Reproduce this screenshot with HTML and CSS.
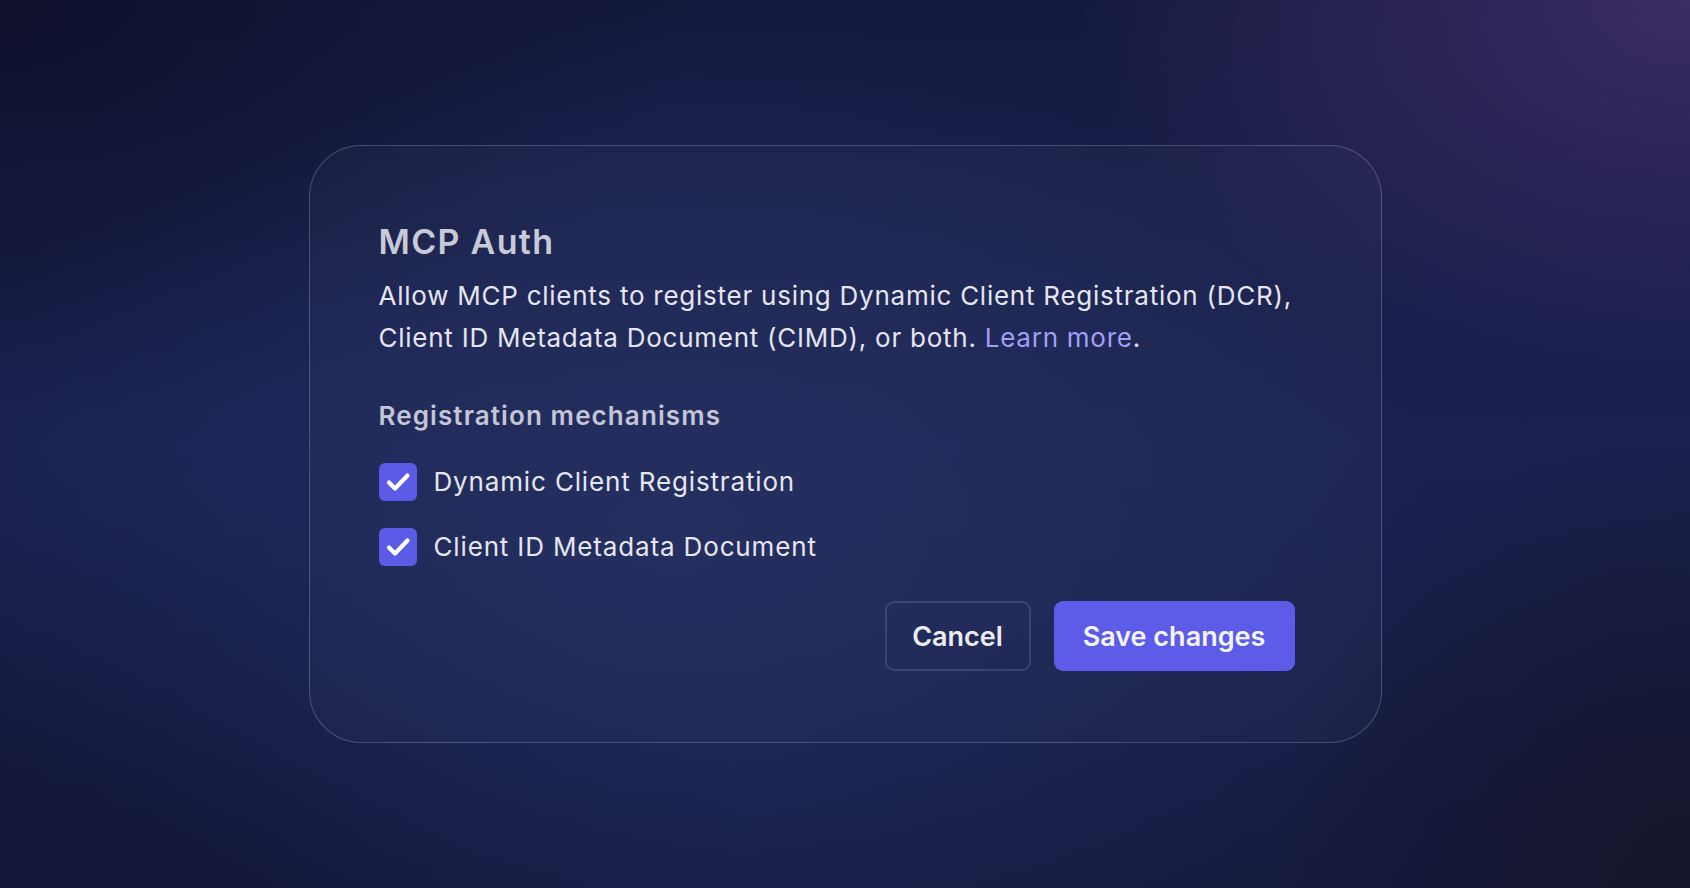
FILE: index.html
```html
<!DOCTYPE html>
<html lang="en">
<head>
<meta charset="utf-8">
<title>MCP Auth</title>
<link rel="stylesheet" href="styles.css">
</head>
<body>
<main class="stage">
  <section class="card">
    <h1 class="title">MCP Auth</h1>
    <p class="desc">Allow MCP clients to register using Dynamic Client Registration (DCR),<br>Client ID Metadata Document (CIMD), or both. <a class="link" href="#">Learn more</a>.</p>
    <h2 class="section-title">Registration mechanisms</h2>
    <div class="options">
      <label class="option">
        <span class="checkbox">
          <svg viewBox="0 0 38 38" width="38" height="38"><path d="M10 19.5 L16 25.5 L28.5 12.5" fill="none" stroke="#fff" stroke-width="4.2" stroke-linecap="round" stroke-linejoin="round"/></svg>
        </span>
        <span class="option-label">Dynamic Client Registration</span>
      </label>
      <label class="option">
        <span class="checkbox">
          <svg viewBox="0 0 38 38" width="38" height="38"><path d="M10 19.5 L16 25.5 L28.5 12.5" fill="none" stroke="#fff" stroke-width="4.2" stroke-linecap="round" stroke-linejoin="round"/></svg>
        </span>
        <span class="option-label">Client ID Metadata Document</span>
      </label>
    </div>
    <div class="actions">
      <button class="btn btn-secondary" type="button">Cancel</button>
      <button class="btn btn-primary" type="button">Save changes</button>
    </div>
  </section>
</main>
</body>
</html>
```

FILE: styles.css
```css
* { box-sizing: border-box; }

html, body {
  margin: 0;
  height: 100%;
}

body {
  font-family: Inter, "Noto Sans", "Liberation Sans", sans-serif;
  background-color: #161c45;
  background-image:
    radial-gradient(ellipse 620px 380px at 100% 0%, rgba(72, 50, 112, 0.75), rgba(72, 50, 112, 0) 100%),
    radial-gradient(ellipse 420px 460px at 100% 100%, rgba(20, 20, 38, 0.85), rgba(20, 20, 38, 0) 100%),
    radial-gradient(ellipse 760px 520px at 40% 60%, rgba(32, 44, 96, 0.9), rgba(32, 44, 96, 0) 100%),
    radial-gradient(ellipse 700px 420px at 0% 0%, rgba(14, 16, 42, 0.9), rgba(14, 16, 42, 0) 100%),
    radial-gradient(ellipse 600px 380px at 10% 100%, rgba(16, 20, 52, 0.8), rgba(16, 20, 52, 0) 100%),
    linear-gradient(180deg, #141a3f 0%, #1a2150 50%, #161b40 100%);
}

.stage {
  height: 100%;
  display: flex;
  align-items: center;
  justify-content: center;
}

.card {
  width: 1073px;
  border: 1px solid rgba(190, 195, 235, 0.28);
  border-radius: 52px;
  background: rgba(255, 255, 255, 0.025);
  padding: 76px 86px 71px 69px;
  display: flex;
  flex-direction: column;
}

.title {
  margin: 0;
  font-size: 34px;
  line-height: 40px;
  font-weight: 600;
  color: #c9cad8;
  letter-spacing: 1.3px;
}

.desc {
  margin: 13px 0 0;
  font-size: 26px;
  line-height: 42px;
  font-weight: 400;
  color: #e5e5ef;
  letter-spacing: 0.75px;
  white-space: nowrap;
}

.link {
  color: #a39ff6;
  text-decoration: none;
}

.section-title {
  margin: 42px 0 0;
  font-size: 26px;
  line-height: 30px;
  font-weight: 600;
  color: #c4c5d5;
  letter-spacing: 1.1px;
}

.options {
  margin-top: 32px;
  display: flex;
  flex-direction: column;
  gap: 27px;
}

.option {
  display: flex;
  align-items: center;
  gap: 17px;
  height: 38px;
}

.checkbox {
  width: 38px;
  height: 38px;
  border-radius: 6px;
  background: #5b5be7;
  display: flex;
  align-items: center;
  justify-content: center;
  flex: none;
}

.checkbox svg { display: block; }

.option-label {
  font-size: 26px;
  line-height: 38px;
  color: #e6e6ef;
  letter-spacing: 0.85px;
}

.actions {
  margin-top: 35px;
  display: flex;
  justify-content: flex-end;
  gap: 23px;
}

.btn {
  height: 70px;
  border-radius: 9px;
  font-family: inherit;
  font-size: 27px;
  font-weight: 600;
  white-space: nowrap;
  display: flex;
  align-items: center;
  justify-content: center;
  padding: 0;
  cursor: pointer;
}

.btn-secondary {
  width: 146px;
  background: transparent;
  border: 2px solid rgba(200, 205, 240, 0.16);
  color: #ebebf3;
}

.btn-primary {
  width: 241px;
  background: #5d5ce8;
  border: none;
  color: #f4f4fb;
}
```
